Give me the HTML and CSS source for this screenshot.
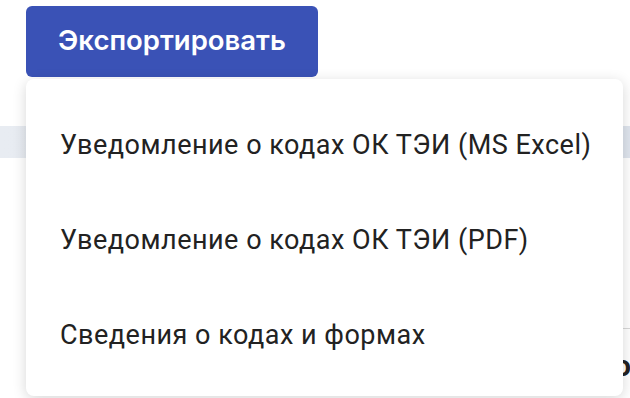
FILE: index.html
```html
<!DOCTYPE html>
<html lang="ru">
<head>
  <meta charset="UTF-8">
  <title>Экспорт</title>
  <link rel="stylesheet" href="styles.css">
</head>
<body>
  <div class="page">
    <div class="toolbar">
      <div class="export">
        <button type="button" class="export-btn">Экспортировать</button>
        <ul class="menu">
          <li>Уведомление о кодах ОК ТЭИ (MS Excel)</li>
          <li>Уведомление о кодах ОК ТЭИ (PDF)</li>
          <li>Сведения о кодах и формах</li>
        </ul>
      </div>
    </div>
    <div class="table">
      <div class="table-head"></div>
      <div class="table-row"></div>
      <div class="table-row"><span class="cell">о</span></div>
    </div>
  </div>
</body>
</html>
```

FILE: styles.css
```css
html, body {
  margin: 0;
  background: #fff;
  overflow: hidden;
}
.page {
  width: 630px;
  height: 398px;
  overflow: hidden;
}
.toolbar {
  padding: 6px 0 0 26px;
}
.export {
  position: relative;
  display: inline-block;
}
.export-btn {
  display: block;
  width: 292px;
  height: 71px;
  border: none;
  border-radius: 6px;
  background: #3a52b6;
  color: #fff;
  font-family: Inter, "Noto Sans", sans-serif;
  font-size: 27.5px;
  font-weight: 600;
  padding: 0 0 4px 0;
  cursor: pointer;
}
.menu {
  position: absolute;
  z-index: 2;
  top: 73px;
  left: 0;
  width: 597px;
  height: 317px;
  box-sizing: border-box;
  margin: 0;
  padding: 18px 0 0 0;
  list-style: none;
  background: #fff;
  border-radius: 8px;
  box-shadow: 0 3px 14px rgba(0, 0, 0, 0.16);
}
.menu li {
  height: 95px;
  display: flex;
  align-items: center;
  padding: 0 34px;
  font-family: Roboto, "Liberation Sans", sans-serif;
  font-size: 27px;
  letter-spacing: 0.5px;
  color: #222;
  white-space: nowrap;
}
.table {
  margin-top: 49px;
}
.table-head {
  height: 32px;
  background: linear-gradient(90deg, #e8ecf2, #dfe5ee);
}
.table-row {
  height: 170px;
  margin-left: 600px;
  border-bottom: 1px solid #d8d8d8;
}
.table-row:last-child {
  border-bottom: none;
  height: 60px;
  padding-left: 14px;
}
.cell {
  display: inline-block;
  margin-top: 20px;
  font-family: Inter, "Noto Sans", sans-serif;
  font-weight: 700;
  font-size: 28px;
  color: #222;
}
```
